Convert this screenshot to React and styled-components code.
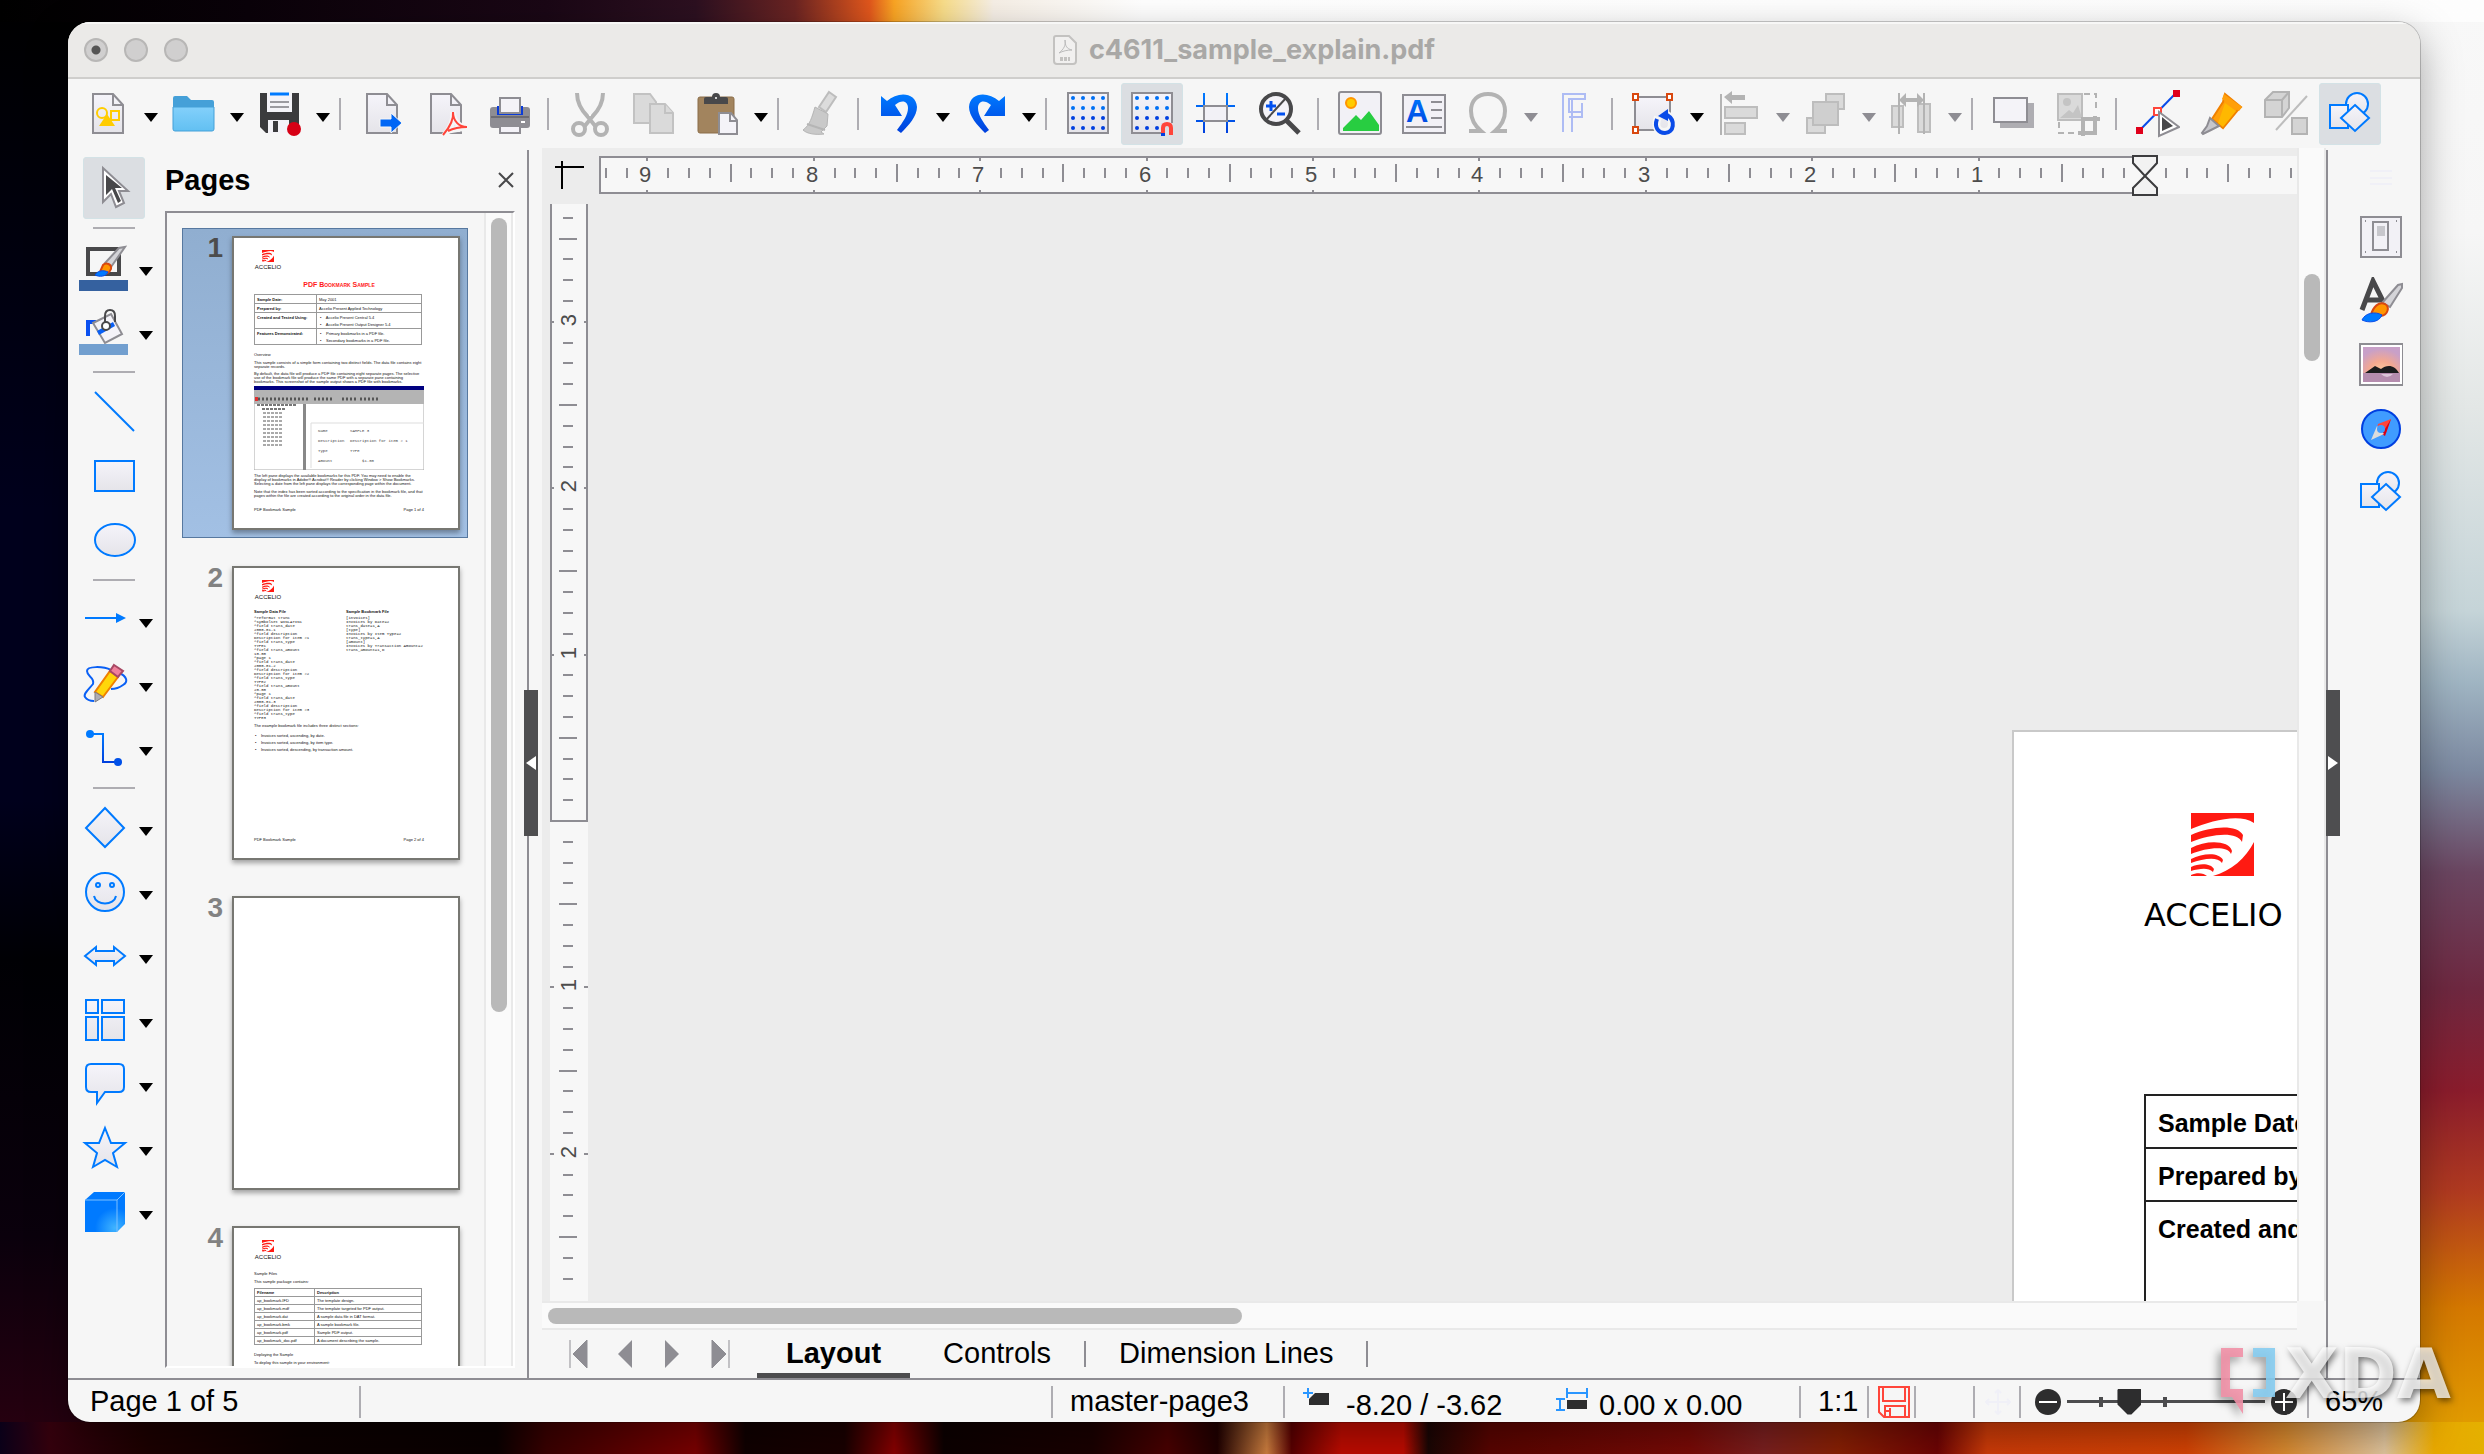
import React, { useState } from "react";
import styled, { createGlobalStyle, css } from "styled-components";

const GlobalStyle = createGlobalStyle`
  * {
    box-sizing: border-box;
  }
  body {
    margin: 0;
    background: #000;
    font-family: "Liberation Sans", Arial, sans-serif;
    font-size: 29px;
    color: #000;
  }
  button {
    margin: 0;
    padding: 0;
    border: 0;
    background: none;
    font: inherit;
    color: inherit;
  }
`;

const Desktop = styled.div`
  position: relative;
  display: flex;
  height: 100vh;
  min-height: 900px;
  padding: 22px 64px 32px 68px;
  overflow: hidden;
  background:
    linear-gradient(90deg, #000 0%, #0a0209 10%, #1a0715 22%, #2c1020 28%, #6b2422 32%, #e0561c 35%, #f9a423 36%, #f8dd8a 38%, #f6efe6 40%, #fff 46%, #fdfdfd 100%) top / 100% 22px no-repeat,
    linear-gradient(90deg, #0a0018 0%, #33000d 2%, #1c0000 6%, #0c0000 12%, #0a0000 20%, #3a0000 22%, #7c0000 28%, #100000 30%, #1a0000 34%, #8a0000 36%, #0c0000 38%, #1a0000 44%, #4a0000 47%, #200000 49%, #d08040 51%, #5a0000 52%, #c00c00 54%, #c00c00 56.5%, #1a0604 57.5%, #5a0400 60%, #7a0a06 68%, #7c2020 71%, #8a2004 74%, #700404 78%, #d03c08 80%, #d84404 88%, #dc8c30 92%, #e4c8a0 96%, #e8a800 98%, #e4b000 100%) bottom / 100% 32px no-repeat,
    linear-gradient(180deg, #f8f8f8 0%, #f6f6f6 16%, #e3e7e6 28%, #c5d4d8 42%, #9fb4c2 47%, #7c89a0 53%, #6a4560 60%, #6e2840 68%, #8a1c2c 75%, #b03a20 82%, #d47800 90%, #e4a400 100%) right / 100px 100% no-repeat,
    linear-gradient(180deg, #000 0%, #00001c 35%, #00001c 55%, #000004 66%, #0a000c 85%, #2a0010 100%) left / 100px 100% no-repeat;
`;

const Window = styled.main`
  display: flex;
  flex: 1;
  flex-direction: column;
  min-width: 0;
  overflow: hidden;
  border-radius: 22px;
  background: #f6f6f6;
  box-shadow: 0 0 0 1px rgba(0, 0, 0, 0.2), 0 14px 40px rgba(0, 0, 0, 0.35);
`;

const TitleBar = styled.header`
  position: relative;
  display: flex;
  align-items: center;
  justify-content: center;
  gap: 12px;
  height: 57px;
  flex: none;
  padding-bottom: 2px;
  background: #ebeae8;
  border-top: 2px solid #f7f7f6;
  border-bottom: 2px solid #cfcecc;
`;

const Lights = styled.div`
  position: absolute;
  left: 16px;
  top: 14px;
  display: flex;
  gap: 16px;
`;

const Light = styled.button`
  width: 24px;
  height: 24px;
  border: 2px solid #b8b7b6;
  border-radius: 50%;
  background: ${({ $edited }) =>
    $edited ? "radial-gradient(circle, #555 0 4px, #d0cfcf 5px)" : "#d0cfcf"};
`;

const FileName = styled.h1`
  margin: 0;
  font-family: Inter, "Liberation Sans", sans-serif;
  font-size: 27px;
  line-height: 32px;
  font-weight: 700;
  color: #a9a8a6;
`;

const Toolbar = styled.div`
  display: flex;
  align-items: center;
  height: 69px;
  flex: none;
  padding: 0 0 0 8px;
`;

const ToolButton = styled.button`
  display: flex;
  align-items: center;
  justify-content: center;
  width: 62px;
  height: 62px;
  margin: 1px;
  flex: none;
  border-radius: 3px;
  border: 1px solid transparent;
  ${({ $on }) =>
    $on &&
    css`
      background: #dbdee2;
      border-color: #d3e2e6;
    `}
`;

const DropButton = styled.button`
  display: flex;
  align-items: center;
  justify-content: center;
  width: 22px;
  height: 48px;
  padding-top: 7px;
  flex: none;
`;

const BarRule = styled.span`
  width: 2px;
  height: 32px;
  margin: 0 9px 0 5px;
  flex: none;
  background: #aeadb2;
`;

const Body = styled.div`
  display: flex;
  flex: 1;
  min-height: 0;
`;

const ToolColumn = styled.nav`
  width: 97px;
  flex: none;
  padding: 8px 0 0 15px;
  overflow: hidden;
`;

const ToolRow = styled.div`
  display: flex;
  align-items: center;
  height: 64px;
`;

const ColumnButton = styled(ToolButton)`
  margin: 0;
  width: ${({ $drop }) => ($drop ? "44px" : "62px")};
`;

const ColumnDrop = styled(DropButton)`
  margin-left: 8px;
`;

const ColumnRule = styled.hr`
  width: 42px;
  height: 2px;
  margin: 7px 0 7px 10px;
  border: 0;
  background: #aeadb2;
`;

const PagesPanel = styled.section`
  display: flex;
  flex-direction: column;
  width: 362px;
  flex: none;
  padding: 0 12px 10px 0;
`;

const PanelHead = styled.div`
  display: flex;
  align-items: center;
  justify-content: space-between;
  height: 63px;
  flex: none;
`;

const PanelTitle = styled.h2`
  margin: 0;
  font-size: 29px;
  line-height: 32px;
`;

const CloseButton = styled.button`
  display: flex;
  padding: 1px;
`;

const PageBox = styled.div`
  display: flex;
  flex: 1;
  min-height: 0;
  border: 2px solid #8e8d93;
  border-right-color: #fff;
  border-bottom-color: #fff;
`;

const PageList = styled.ol`
  display: flex;
  flex: 1;
  flex-direction: column;
  gap: 20px;
  margin: 0;
  padding: 15px 15px 0;
  overflow: hidden;
  list-style: none;
`;

const PageItem = styled.button`
  display: flex;
  align-items: flex-start;
  justify-content: flex-end;
  gap: 9px;
  width: 286px;
  height: 310px;
  padding: 7px;
  border: 1px solid ${({ $on }) => ($on ? "#57789f" : "transparent")};
  background: ${({ $on }) => ($on ? "linear-gradient(#90aed0, #a2c0e4)" : "none")};
  text-align: left;
`;

const PageNumber = styled.span`
  font-size: 28px;
  font-weight: 700;
  line-height: 24px;
  color: ${({ $on }) => ($on ? "#4c4c4c" : "#828282")};
`;

const Miniature = styled.span`
  display: flex;
  flex-direction: column;
  width: 228px;
  height: 294px;
  padding: 12px 34px 0 20px;
  border: 2px solid #777772;
  background: #fff;
  box-shadow: 0 3px 5px rgba(0, 0, 0, 0.35);
  font-size: 4px;
  line-height: 4px;
  color: #111;
  white-space: pre;
  overflow: hidden;
`;

const MiniBrand = styled.span`
  display: flex;
  flex-direction: column;
  align-items: center;
  gap: 2px;
  width: 28px;
  height: 22px;
  font-size: 6px;
  line-height: 6px;
`;

const MiniTitle = styled.strong`
  margin: 9px 0 5px;
  text-align: center;
  font-size: 7px;
  line-height: 8px;
  font-variant: small-caps;
  color: #ff1a1a;
`;

const MiniGrid = styled.span`
  display: grid;
  grid-template-columns: ${({ $first }) => $first}px 1fr;
  width: 168px;
  border: solid #999;
  border-width: 1px 0 0 1px;
`;

const MiniCell = styled.span`
  padding: 1px 2px 0;
  border: solid #999;
  border-width: 0 1px 1px 0;
  line-height: ${({ $tight }) => ($tight ? "6px" : "7px")};
  font-weight: ${({ $bold }) => ($bold ? 700 : 400)};
`;

const MiniText = styled.span`
  margin-top: ${({ $gap = 4 }) => $gap}px;
  font-family: ${({ $mono }) => ($mono ? '"Liberation Mono", monospace' : "inherit")};
  font-weight: ${({ $bold }) => ($bold ? 700 : 400)};
  line-height: ${({ $loose }) => ($loose ? "7px" : "4px")};
`;

const MiniColumns = styled.span`
  display: grid;
  grid-template-columns: 92px 1fr;
`;

const MiniFoot = styled.span`
  display: flex;
  justify-content: space-between;
  margin: auto 0 16px;
`;

const ScrollTrack = styled.div`
  display: flex;
  flex: none;
  background: #fafafa;
  border: 2px solid #e9e9e9;
  ${({ $across }) =>
    $across
      ? css`
          height: 29px;
          margin-right: 29px;
          padding: 5px 6px;
          border-width: 2px 0;
        `
      : css`
          width: 29px;
          padding: 5px 0 5px 5px;
          border-width: 0 2px;
        `}
`;

const ScrollThumb = styled.div`
  border-radius: 8px;
  background: #b9b9b9;
  width: ${({ $w }) => $w || "16px"};
  height: ${({ $h }) => $h || "16px"};
  margin-top: ${({ $from = 0 }) => $from}px;
`;

const Splitter = styled.div`
  position: relative;
  width: ${({ $wide }) => ($wide ? "15px" : "14px")};
  flex: none;
  margin-top: 2px;
  border-left: 2px solid #8e8d93;
`;

const SplitHandle = styled.button`
  position: absolute;
  top: calc(50% - 74px);
  left: ${({ $left }) => $left}px;
  display: flex;
  align-items: center;
  justify-content: center;
  width: 14px;
  height: 146px;
  background: #4e4e50;
`;

const Center = styled.section`
  display: flex;
  flex: 1;
  flex-direction: column;
  min-width: 0;
`;

const Work = styled.div`
  display: flex;
  flex: 1;
  min-height: 0;
`;

const Canvas = styled.div`
  display: flex;
  flex: 1;
  flex-direction: column;
  min-width: 0;
  background: #ececec;
`;

const RulerRow = styled.div`
  display: flex;
  height: 56px;
  flex: none;
  padding-top: 7px;
`;

const RulerCorner = styled.div`
  width: 57px;
  flex: none;
  padding: 6px 0 0 13px;
`;

const AcrossRuler = styled.div`
  display: flex;
  flex: 1;
  justify-content: flex-end;
  min-width: 0;
  overflow: hidden;
`;

const CanvasRow = styled.div`
  display: flex;
  flex: 1;
  min-height: 0;
`;

const DownRuler = styled.div`
  width: 38px;
  margin: 0 19px 0 8px;
  flex: none;
  overflow: hidden;
  background: #f7f7f7;
`;

const RulerDrawing = styled.svg`
  display: block;
  flex: none;
  font-size: 22px;
  fill: #4c4c4c;
  text-anchor: middle;
`;

const Desk = styled.div`
  display: flex;
  flex: 1;
  justify-content: flex-end;
  padding-top: 526px;
  overflow: hidden;
`;

const Sheet = styled.article`
  width: 285px;
  flex: none;
  padding: 81px 0 0 130px;
  border: solid #c9c9c9;
  border-width: 2px 0 0 2px;
  background: #fff;
  overflow: hidden;
`;

const Brand = styled.div`
  display: flex;
  flex-direction: column;
  gap: 19px;
  height: 281px;
  white-space: nowrap;
  font-family: "DejaVu Sans", sans-serif;
  font-size: 32px;
  line-height: 40px;
`;

const BrandMark = styled.svg`
  margin-left: ${({ $inset = 0 }) => $inset}px;
  flex: none;
`;

const SheetTable = styled.table`
  width: 400px;
  border-collapse: collapse;
  font-size: 25px;
  line-height: 30px;
  white-space: nowrap;

  th {
    height: 53px;
    padding: 12px 12px 8px;
    border: 2px solid #222;
    text-align: left;
    vertical-align: top;
  }
  tr:last-child th {
    height: 200px;
  }
`;

const TabBar = styled.div`
  display: flex;
  align-items: stretch;
  height: 48px;
  flex: none;
  padding-left: 13px;
`;

const NavButton = styled.button`
  display: flex;
  align-items: center;
  justify-content: center;
  width: 47px;
`;

const TabList = styled.div`
  display: flex;
  align-items: center;
  margin-left: 14px;
`;

const Tab = styled.button`
  height: ${({ $on }) => ($on ? "48px" : "26px")};
  line-height: 24px;
  padding: 0 33px;
  ${({ $on }) =>
    $on
      ? css`
          font-weight: 700;
          padding: 0 29px;
          border-bottom: 5px solid #4c4c4e;
          border-top: 3px solid transparent;
        `
      : css`
          padding-bottom: 2px;
          border-right: 2px solid #8e8d93;
        `}
`;

const SideBar = styled.aside`
  display: flex;
  flex-direction: column;
  align-items: center;
  width: 80px;
  flex: none;
  padding-left: 2px;
`;

const SideButton = styled.button`
  display: flex;
  align-items: center;
  justify-content: center;
  width: 62px;
  height: ${({ $small }) => ($small ? "57px" : "64px")};
`;

const StatusBar = styled.footer`
  display: flex;
  align-items: center;
  height: 44px;
  flex: none;
  padding-top: 1px;
  border-top: 2px solid #8e8d93;
`;

const StatusCell = styled.div`
  display: flex;
  align-items: center;
  gap: ${({ $gap = 0 }) => $gap}px;
  width: ${({ $w }) => $w}px;
  height: 32px;
  flex: ${({ $grow }) => ($grow ? 1 : "none")};
  padding-left: ${({ $pad = 0 }) => $pad}px;
  border-left: 2px solid ${({ $bare }) => ($bare ? "transparent" : "#aeadb2")};
  white-space: nowrap;
`;

const Reading = styled.span`
  padding-top: 8px;
`;

const RoundButton = styled.button`
  display: flex;
`;

const ZoomRange = styled.input`
  appearance: none;
  width: 198px;
  height: 28px;
  margin: 0;
  background:
    linear-gradient(#4c4c4e, #4c4c4e) 32px 50% / 4px 10px no-repeat,
    linear-gradient(#4c4c4e, #4c4c4e) 96px 50% / 4px 10px no-repeat,
    linear-gradient(#4c4c4e, #4c4c4e) 0 50% / 100% 3px no-repeat;

  &::-webkit-slider-thumb {
    appearance: none;
    width: 24px;
    height: 26px;
    background: #2d2d2e;
    clip-path: polygon(4% 0, 96% 0, 100% 6%, 100% 62%, 58% 100%, 42% 100%, 0 62%, 0 6%);
  }
`;

const Watermark = styled.div`
  position: absolute;
  right: 33px;
  bottom: 36px;
  display: flex;
  align-items: flex-start;
  gap: 8px;
  height: 70px;
  color: rgba(255, 255, 255, 0.75);
  font-family: "DejaVu Sans", sans-serif;
  font-size: 70px;
  line-height: 52px;
  font-weight: 700;
  text-shadow: 2px 3px 6px rgba(0, 0, 0, 0.5);
  pointer-events: none;

  svg {
    filter: drop-shadow(-3px 4px 4px rgba(0, 0, 0, 0.4));
  }
`;

const GREY = "#8e8d93";
const PALE = "#b3b3b3";

const Glyph = ({ w = 44, h = 48, children }) => (
  <svg width={w} height={h} viewBox={`0 0 ${w} ${h}`} fill="none" aria-hidden="true">
    {children}
  </svg>
);

const Caret = ({ off }) => (
  <svg width="14" height="9" viewBox="0 0 14 9" aria-hidden="true">
    <path d="M0 0h14L7 9z" fill={off ? GREY : "#000"} />
  </svg>
);

const Doc = () => (
  <>
    <path d="M7 4h20l10 11v28H7z" fill="url(#paper)" stroke={GREY} strokeWidth="2" />
    <path d="M27 4v11h10" stroke={GREY} strokeWidth="2" />
  </>
);

const Shapes = () => (
  <g fill="url(#paper)" stroke="#007aff" strokeWidth="2">
    <circle cx="29" cy="14" r="11" />
    <path d="M2 15h18v23H2z" />
    <path d="M27 15l14 13-14 13-14-13z" />
  </g>
);

const DotGrid = () => (
  <>
    <path d="M2 3h40v40H2z" fill="url(#paper)" stroke={GREY} strokeWidth="2" />
    {[7, 17, 27, 37].map((x) =>
      [8, 18, 28, 38].map((y) => (
        <circle key={`${x}-${y}`} cx={x} cy={y} r="2" fill={y < 20 ? "#0070f5" : "#003fe0"} />
      ))
    )}
  </>
);

const icons = {
  newDoc: (
    <>
      <Doc />
      <circle cx="16" cy="23" r="5" stroke="#fc0" strokeWidth="2" />
      <path d="M25 21h8v9h-8z" stroke="#fc0" strokeWidth="2" />
      <path d="M21 24l8 12H13z" fill="#fc0" />
    </>
  ),
  folder: (
    <>
      <path d="M1 8q0-2 2-2h12l4 4h21q2 0 2 2v10H1z" fill="#45a0d8" />
      <path d="M1 17h41v22q0 2-2 2H3q-2 0-2-2z" fill="url(#folder)" stroke="#45a0d8" />
    </>
  ),
  save: (
    <>
      <path d="M2 3h39v40H8l-6-6z" fill="#3b3b3d" />
      <path d="M9 3h25v19H9z" fill="#f4f3f8" />
      <path d="M12 4h19" stroke="#007aff" strokeWidth="3" />
      <path d="M12 12h19M12 17h19" stroke="#9b9aa0" strokeWidth="2" />
      <path d="M10 30h21v13H10z" fill="#f4f3f8" />
      <path d="M15 31h5v11h-5z" fill="#3b3b3d" />
      <circle cx="36" cy="39" r="7" fill="#d70015" />
    </>
  ),
  exportDoc: (
    <>
      <Doc />
      <path d="M20 29h11v-6l11 10-11 10v-6H20z" fill="#0066f5" stroke="#f6f6f6" />
    </>
  ),
  exportPdf: (
    <>
      <Doc />
      <path d="M20 46c7-8 10-16 9-24 0 9 6 15 14 16-9 0-14 2-21 3" stroke="#f6f6f6" strokeWidth="6" />
      <path d="M19 45c7-8 11-15 10-23 0 9 6 15 14 15-8 0-13 1-19 4" stroke="#ff453a" strokeWidth="2" />
    </>
  ),
  print: (
    <>
      <rect x="2" y="17" width="40" height="21" rx="3" fill={GREY} />
      <path d="M3 27h38" stroke="#6d6c72" strokeWidth="2" />
      <path d="M9 16h26v9H9z" fill="#0a3bd8" />
      <path d="M12 8h20v15H12zM12 36h20v7H12z" fill="#f4f3f8" stroke={GREY} strokeWidth="2" />
      <path d="M33 32h4" stroke="#fff" strokeWidth="2" />
    </>
  ),
  cut: (
    <>
      <path d="M9 3c0 9 5 18 11 24l8 10M35 3c0 9-5 18-11 24l-8 10" stroke={PALE} strokeWidth="4" />
      <circle cx="11" cy="39" r="6" stroke={PALE} strokeWidth="4" />
      <circle cx="33" cy="39" r="6" stroke={PALE} strokeWidth="4" />
      <circle cx="22" cy="25" r="1" fill="#fff" />
    </>
  ),
  copy: (
    <g fill="#dadada" stroke="#c2c2c2" strokeWidth="2">
      <path d="M2 4h16l6 8v21H2z" />
      <path d="M18 14h15l8 9v20H18z" />
      <path d="M33 14v9h8" />
    </g>
  ),
  paste: (
    <>
      <rect x="2" y="7" width="36" height="36" rx="2" fill="#a2845e" stroke="#8a6d48" />
      <path d="M8 14V9q0-2 2-2h6q0-4 4-4t4 4h6q2 0 2 2v5z" fill="#48484a" />
      <circle cx="20" cy="8" r="1" fill="#fff" />
      <path d="M23 23h12l6 7v14H23z" fill="#f4f3f8" stroke={GREY} strokeWidth="2" />
      <path d="M34 23v8h7" stroke={GREY} strokeWidth="2" />
    </>
  ),
  brush: (
    <>
      <path d="M31 2l7 5-10 15-7-5z" fill="#dcdcdc" stroke="#bdbdbd" strokeWidth="2" />
      <path d="M17 17l13 7-1 12-6 6 3 2c-8 1-17 0-21-4 7-5 9-13 12-23z" fill="#c9c9c9" stroke="#b5b5b5" />
      <path d="M9 34l18 6" stroke="#b5b5b5" strokeWidth="2" />
    </>
  ),
  undo: (
    <path
      d="M3 6l6 5C20 1 38 2 39 17c0 9-8 18-16 26l-4-3c6-8 11-15 11-22 0-7-6-9-13-3l7 11H3z"
      fill="url(#blue)"
    />
  ),
  redo: (
    <path
      d="M41 6l-6 5C24 1 6 2 5 17c0 9 8 18 16 26l4-3c-6-8-11-15-11-22 0-7 6-9 13-3l-7 11h21z"
      fill="url(#blue)"
    />
  ),
  grid: <DotGrid />,
  snap: (
    <>
      <DotGrid />
      <path d="M31 45V33h12v12z" fill="#dbdee2" />
      <path d="M33 45v-7q0-4 4-4t4 4v7" stroke="#ff453a" strokeWidth="4" />
      <path d="M31 43h4v3h-4z" fill="#003fe0" />
    </>
  ),
  guides: (
    <>
      <path d="M10 3v40M33 3v40M2 16h39M2 31h39" stroke="url(#blueLine)" strokeWidth="2" />
      <path d="M10 16h23v15H10z" stroke={GREY} strokeWidth="2" fill="#f2f1f6" />
    </>
  ),
  zoom: (
    <>
      <circle cx="18" cy="19" r="15" fill="#f4f3f8" stroke="#48484a" strokeWidth="4" />
      <path d="M28 30l13 13" stroke="#48484a" strokeWidth="5" />
      <path d="M8 30L28 8" stroke="#48484a" strokeWidth="2" />
      <path d="M8 16h10M13 11v10M19 24h8" stroke="#0050f0" strokeWidth="3" />
    </>
  ),
  image: (
    <>
      <rect x="1" y="2" width="42" height="42" rx="2" fill="#f2f1f6" stroke={GREY} strokeWidth="2" />
      <circle cx="13" cy="13" r="5" fill="#fc0" stroke="#ff9500" strokeWidth="2" />
      <path d="M5 41v-3l13-13 5 5 8-9 10 14v6z" fill="#28cd41" />
    </>
  ),
  textBox: (
    <>
      <path d="M1 5h42v38H1z" fill="#f2f1f6" stroke={GREY} strokeWidth="2" />
      <path d="M29 12h11M29 20h11M29 28h11M4 37h36" stroke={GREY} strokeWidth="2" />
      <text x="4" y="32" fontSize="31" fontFamily="Liberation Sans" fontWeight="700" fill="url(#blue)">
        A
      </text>
    </>
  ),
  omega: (
    <path
      d="M3 41h12C8 35 5 29 5 21 5 10 12 4 22 4s17 6 17 17c0 8-3 14-10 20h12"
      stroke={PALE}
      strokeWidth="4"
    />
  ),
  fontwork: (
    <path
      d="M11 42V4h22v5H17v13h13v5H17M11 4v38M20 42V9M30 13v13"
      stroke="#aebcf4"
      strokeWidth="2"
    />
  ),
  transform: (
    <>
      <path d="M3 7h35v33H3z" fill="url(#paper)" stroke={GREY} strokeWidth="2" />
      <path d="M1 4h5v6H1zM35 4h5v6h-5zM1 37h5v6H1z" fill="#fff" stroke="#d9480f" strokeWidth="2" />
      <path d="M26 27c-3 7-2 15 6 15 9 0 11-12 3-17" stroke="#f6f6f6" strokeWidth="8" />
      <path d="M25 29c-3 8 1 14 8 14 9 0 11-13 2-18" stroke="#0a4be8" strokeWidth="4" />
      <path d="M26 26l10-7v12z" fill="#0a4be8" />
    </>
  ),
  align: (
    <g fill="#dadada" stroke="#bdbdbd" strokeWidth="2">
      <path d="M3 4v41" stroke={PALE} />
      <path d="M7 17h32v11H7zM7 33h20v11H7z" />
      <path d="M6 7l8-6v4h13v5H14v4z" fill={PALE} stroke="none" />
    </g>
  ),
  arrange: (
    <g fill="#dadada" stroke="#bdbdbd" strokeWidth="2">
      <path d="M22 4h18v15H22zM3 28h18v15H3z" />
      <path d="M9 12h25v23H9z" fill="#cfcfcf" />
    </g>
  ),
  distribute: (
    <g fill="#dadada" stroke="#bdbdbd" strokeWidth="2">
      <path d="M2 16h11v21H2zM28 14h12v28H28z" />
      <path d="M9 3v41M34 3v41" stroke={PALE} />
      <path d="M9 10l7-7v5h11V3l7 7-7 7v-5H16v5z" fill={PALE} stroke="none" />
    </g>
  ),
  shadow: (
    <>
      <path d="M8 13h34v25H8z" fill="#aeadb2" />
      <path d="M2 8h33v24H2z" fill="#f4f3f8" stroke={GREY} strokeWidth="2" />
    </>
  ),
  crop: (
    <>
      <path d="M2 4h24v26H2z" fill="#dadada" stroke="#bdbdbd" strokeWidth="2" />
      <circle cx="11" cy="12" r="4" fill="#c4c4c4" />
      <path d="M4 28l9-8 4 3 5-8 4 13z" fill="#c4c4c4" />
      <path d="M28 4h12v18M3 32v11h18" stroke={PALE} strokeWidth="2" strokeDasharray="6 4" />
      <path d="M22 43h17V26M44 29H27v17" stroke={PALE} strokeWidth="4" />
    </>
  ),
  points: (
    <>
      <path d="M3 41L40 3" stroke="#0a4be8" strokeWidth="2" />
      <path d="M0 37h7v7H0zM37 0h7v7h-7z" fill="#e0001b" />
      <path d="M18 18h7v7h-7z" fill="#fff" stroke="#ff453a" strokeWidth="2" />
      <path d="M23 22v24l20-9z" fill="#fff" stroke={GREY} strokeWidth="2" />
      <path d="M26 27v14l11-5z" fill="#48484a" />
    </>
  ),
  glue: (
    <>
      <path d="M25 4l16 13-4 4-14 17-11-9 11-17z" fill="#ff9f0a" stroke="#f08000" strokeWidth="2" />
      <path d="M25 13l11 8-13 16-5-4z" fill="#ffb800" />
      <path d="M24 4l18 13-3 4L22 9z" fill="#ff9f0a" />
      <path d="M10 28l9 8-8 4-8 4-1-1 5-7z" fill="#c7c7cc" stroke={GREY} strokeWidth="2" />
    </>
  ),
  extrusion: (
    <>
      <path d="M1 10l8-8h16v16l-7 9H1zM1 10h17v17M18 10l7-8" fill="#d4d4d4" stroke={PALE} strokeWidth="2" />
      <path d="M43 6L12 40" stroke="#bdbdbd" strokeWidth="2" />
      <path d="M28 28h15v16H28z" fill="#d4d4d4" stroke={PALE} strokeWidth="2" />
    </>
  ),
  shapes: <Shapes />,
  select: (
    <>
      <path d="M11 4v34l8-8 5 13 8-4-5-12h9z" fill="#fff" stroke={GREY} strokeWidth="2" />
      <path d="M14 11v20l6-6 6 14 3-2-6-13h7z" fill="#48484a" />
    </>
  ),
  lineColor: (
    <>
      <path d="M5 5h31v25H5z" stroke="#48484a" strokeWidth="4" fill="#f6f6f6" />
      <path d="M42 3l-14 20-6-4L36 4z" fill="#d4d4d8" stroke={GREY} strokeWidth="2" />
      <path d="M20 21c3-3 9-1 8 4-2 5-6 6-12 5z" fill="#ff9500" stroke="#d9480f" strokeWidth="2" />
      <path d="M12 31c3-5 9-5 13-3-2 5-9 5-13 3z" fill="#007aff" stroke="#0a4be8" />
      <path d="M-4 36h49v11H-4z" fill="#35619f" />
    </>
  ),
  fillColor: (
    <>
      <path d="M5 28V14h8" stroke="#0a50f0" strokeWidth="4" />
      <path d="M10 15l18-9 11 20-17 9z" fill="#f4f3f8" stroke={GREY} strokeWidth="2" />
      <path d="M14 23l16-9 2 4-16 9z" fill="#0a60f5" />
      <path d="M22 16V8q0-6 5-6t5 6v6" stroke="#48484a" strokeWidth="2" />
      <circle cx="23" cy="18" r="4" fill="#fff" stroke="#48484a" strokeWidth="2" />
      <path d="M-4 36h49v11H-4z" fill="#729fcf" />
    </>
  ),
  line: <path d="M3 4l39 39" stroke="#007aff" strokeWidth="2" />,
  rect: <path d="M3 9h39v30H3z" fill="url(#paper)" stroke="#007aff" strokeWidth="2" />,
  ellipse: <ellipse cx="23" cy="24" rx="20" ry="16" fill="url(#paper)" stroke="#007aff" strokeWidth="2" />,
  arrow: (
    <>
      <path d="M2 22h34" stroke="#007aff" strokeWidth="2" />
      <path d="M33 17l10 5-10 5z" fill="#007aff" />
    </>
  ),
  pencil: (
    <>
      <path
        d="M28 10C20 6 4 6 4 11c0 6 8 6 6 13-4 5-10 10-8 13 2 3 6 4 9 4M35 12c10 5 10 10 5 13-4 3-8 4-12 4"
        stroke="#0a60f5"
        strokeWidth="2"
      />
      <path d="M27 11l8 6-15 20-8-5z" fill="#ffd60a" stroke="#f08000" strokeWidth="2" />
      <path d="M12 32l8 5-8 5z" fill="#aeadb2" stroke="#7c7b80" />
      <path d="M31 5l9 6-5 6-8-6z" fill="#f0809a" stroke="#a84864" strokeWidth="2" />
    </>
  ),
  connector: (
    <>
      <path d="M7 10h13v28h15" stroke="url(#blue)" strokeWidth="2" />
      <circle cx="7" cy="10" r="4" fill="#007aff" />
      <circle cx="35" cy="38" r="4" fill="#0050e8" />
    </>
  ),
  diamond: <path d="M22 4l19 20-19 19L3 24z" fill="url(#paper)" stroke="#007aff" strokeWidth="2" />,
  smiley: (
    <g stroke="#007aff" strokeWidth="2">
      <circle cx="22" cy="24" r="19" fill="url(#paper)" />
      <circle cx="15" cy="17" r="2" />
      <circle cx="29" cy="17" r="2" />
      <path d="M11 28c2 10 20 10 22 0" />
    </g>
  ),
  doubleArrow: (
    <path
      d="M2 24l11-9v4h18v-4l11 9-11 9v-4H13v4z"
      fill="url(#paper)"
      stroke="#007aff"
      strokeWidth="2"
    />
  ),
  flowchart: (
    <path
      d="M3 4h12v13H3zM19 4h22v13H19zM3 21h12v23H3zM19 21h22v23H19z"
      fill="url(#paper)"
      stroke="#007aff"
      strokeWidth="2"
    />
  ),
  callout: (
    <path
      d="M8 4h28q5 0 5 5v18q0 5-5 5H22l-8 11V32H8q-5 0-5-5V9q0-5 5-5z"
      fill="url(#paper)"
      stroke="#007aff"
      strokeWidth="2"
    />
  ),
  star: (
    <path
      d="M22 4l6 15h14L30 29l4 14-12-7-12 7 4-14L2 19h14z"
      fill="url(#paper)"
      stroke="#007aff"
      strokeWidth="2"
    />
  ),
  cube: (
    <>
      <path d="M2 12l9-8h31v32l-8 8H2z" fill="url(#cube)" />
      <path d="M2 12h32v32M34 12l8-8" stroke="#7cc0ff" />
    </>
  ),
};

const sideIcons = {
  properties: (
    <>
      <path d="M2 4h40v40H2z" fill="#f2f1f6" stroke={GREY} strokeWidth="2" />
      <path d="M14 9h15v28H14z" stroke={GREY} strokeWidth="2" />
      <path d="M18 13h8v10h-8z" fill="#c7c7cc" />
      <path d="M6 8h1M37 8h1M6 39h1M37 39h1" stroke={GREY} strokeWidth="2" />
    </>
  ),
  styles: (
    <>
      <path d="M3 33L14 4l11 22M7 23h15" stroke="#48484a" strokeWidth="5" />
      <path d="M43 7v4L31 30l-8-4L39 8z" fill="#d4d4d8" stroke={GREY} strokeWidth="2" />
      <path d="M12 38c2-8 8-14 14-11 5 3 3 11-4 12z" fill="#ff9500" stroke="#d9480f" strokeWidth="2" />
      <path d="M3 43c3-7 13-9 20-5-3 8-14 8-20 5z" fill="#007aff" stroke="#0a4be8" />
    </>
  ),
  gallery: (
    <>
      <path d="M1 3h43v41H1z" fill="#fff" stroke={GREY} strokeWidth="2" />
      <path d="M4 6h37v35H4z" fill="url(#dusk)" />
      <path d="M4 32h37v9H4z" fill="#b58cae" />
      <path d="M6 32l10-7 6 3c6-5 14-4 18 4z" fill="#1c1c1e" />
      <path d="M22 33h12q-6 6-12 0z" fill="#dcc4d8" />
    </>
  ),
  navigator: (
    <>
      <circle cx="22" cy="24" r="19" fill="#409cff" stroke="#003fe0" strokeWidth="2" />
      <path d="M32 14L19 19l-1 5 6 6 3-2z" fill="#ff453a" />
      <path d="M32 14l-6 17-3-2z" fill="#d70015" />
      <path d="M18 21l7 8-13 6z" fill="#dcdcdc" />
      <circle cx="22" cy="24" r="4" fill="#409cff" />
    </>
  ),
  shapes: <Shapes />,
};

const toolbarItems = [
  { icon: "newDoc", label: "New", drop: true },
  { icon: "folder", label: "Open", drop: true },
  { icon: "save", label: "Save", drop: true },
  "rule",
  { icon: "exportDoc", label: "Export" },
  { icon: "exportPdf", label: "Export as PDF" },
  { icon: "print", label: "Print" },
  "rule",
  { icon: "cut", label: "Cut" },
  { icon: "copy", label: "Copy" },
  { icon: "paste", label: "Paste", drop: true },
  "rule",
  { icon: "brush", label: "Clone formatting" },
  "rule",
  { icon: "undo", label: "Undo", drop: true },
  { icon: "redo", label: "Redo", drop: true },
  "rule",
  { icon: "grid", label: "Display grid" },
  { icon: "snap", label: "Snap to grid", on: true },
  { icon: "guides", label: "Helplines while moving" },
  { icon: "zoom", label: "Zoom and pan" },
  "rule",
  { icon: "image", label: "Insert image" },
  { icon: "textBox", label: "Insert text box" },
  { icon: "omega", label: "Special character", drop: true, off: true },
  { icon: "fontwork", label: "Fontwork" },
  "rule",
  { icon: "transform", label: "Transformations", drop: true },
  { icon: "align", label: "Align", drop: true, off: true },
  { icon: "arrange", label: "Arrange", drop: true, off: true },
  { icon: "distribute", label: "Distribute", drop: true, off: true },
  "rule",
  { icon: "shadow", label: "Shadow" },
  { icon: "crop", label: "Crop image" },
  "rule",
  { icon: "points", label: "Edit points" },
  { icon: "glue", label: "Glue points" },
  { icon: "extrusion", label: "Toggle extrusion" },
  { icon: "shapes", label: "Show draw functions", on: true },
];

const columnItems = [
  { icon: "select", label: "Select", on: true },
  "rule",
  { icon: "lineColor", label: "Line color", drop: true },
  { icon: "fillColor", label: "Fill color", drop: true },
  "rule",
  { icon: "line", label: "Line" },
  { icon: "rect", label: "Rectangle" },
  { icon: "ellipse", label: "Ellipse" },
  "rule",
  { icon: "arrow", label: "Lines and arrows", drop: true },
  { icon: "pencil", label: "Curves", drop: true },
  { icon: "connector", label: "Connectors", drop: true },
  "rule",
  { icon: "diamond", label: "Basic shapes", drop: true },
  { icon: "smiley", label: "Symbol shapes", drop: true },
  { icon: "doubleArrow", label: "Block arrows", drop: true },
  { icon: "flowchart", label: "Flowchart", drop: true },
  { icon: "callout", label: "Callouts", drop: true },
  { icon: "star", label: "Stars", drop: true },
  { icon: "cube", label: "3D objects", drop: true },
];

const Defs = () => (
  <svg width="0" height="0" style={{ position: "absolute" }} aria-hidden="true">
    <defs>
      <linearGradient id="paper" x1="0" y1="0" x2="0" y2="1">
        <stop stopColor="#f5f4fa" />
        <stop offset="1" stopColor="#e5e4e9" />
      </linearGradient>
      <linearGradient id="folder" x1="0" y1="0" x2="0" y2="1">
        <stop stopColor="#83d0fb" />
        <stop offset="1" stopColor="#62c0f2" />
      </linearGradient>
      <linearGradient id="blue" x1="0" y1="0" x2="0" y2="1">
        <stop stopColor="#007aff" />
        <stop offset="1" stopColor="#0040dd" />
      </linearGradient>
      <linearGradient id="blueLine" gradientUnits="userSpaceOnUse" x1="0" y1="3" x2="0" y2="43">
        <stop stopColor="#007aff" />
        <stop offset="1" stopColor="#0040dd" />
      </linearGradient>
      <radialGradient id="cube" cx="0.75" cy="0.9" r="0.5">
        <stop stopColor="#40b4ff" />
        <stop offset="1" stopColor="#007aff" />
      </radialGradient>
      <radialGradient id="dusk" cx="0.5" cy="0.75" r="0.7">
        <stop stopColor="#ffd0a0" />
        <stop offset="0.5" stopColor="#f4a890" />
        <stop offset="1" stopColor="#c8a0c8" />
      </radialGradient>
    </defs>
  </svg>
);

const AccelioMark = ({ size, inset }) => (
  <BrandMark width={size} height={size} viewBox="0 0 63 63" fill="#ff1a12" $inset={inset}>
    <path d="M0 0h63v10C48 0 20 8 0 16z" />
    <path d="M0 22c20-9 46-11 52 0l-1 7C46 18 20 21 0 29z" />
    <path d="M0 35c15-8 38-8 41 3l-1 3C36 32 15 35 0 41z" />
    <path d="M0 46c12-6 28-7 32 1l-1 3c-5-7-19-4-31 0z" />
    <path d="M0 54c8-4 20-4 23 2l-1 3c-5-5-14-3-22-1z" />
    <path d="M0 62c6-3 13-2 16 1H0z" />
    <path d="M63 29v34H22c18-5 33-18 41-34z" />
  </BrandMark>
);

// length of one inch on the rulers at this zoom, split in eighths
const INCH = 166.4;
const H_ZERO = 1546;
const V_ZERO = 617;

function ticksFor(from, to) {
  const list = [];
  for (let i = from; i <= to; i++) list.push(i);
  return list;
}

function HorizontalRuler() {
  return (
    <RulerDrawing width="1698" height="41" viewBox="0 0 1698 41">
      <path d="M0 1h1698v38H0z" fill="#f7f7f7" />
      <path d={`M${H_ZERO} 2H1v36h${H_ZERO}`} fill="none" stroke={GREY} strokeWidth="2" />
      {ticksFor(-74, 7).map((i) => {
        const x = Math.round(H_ZERO + (i * INCH) / 8);
        if (x < 3) return null;
        if (i % 8 === 0) {
          return i === 0 ? null : (
            <g key={i}>
              <path d={`M${x} 2v4M${x} 35v4`} stroke={GREY} strokeWidth="2" />
              <text x={x - 2} y="27">
                {Math.abs(i / 8)}
              </text>
            </g>
          );
        }
        const d = i % 4 === 0 ? "9v18" : "13v10";
        return <path key={i} d={`M${x} ${d}`} stroke={GREY} strokeWidth="2" />;
      })}
      <path
        d={`M${H_ZERO - 12} 1h24v7l-12 13-12-13zM${H_ZERO - 12} 40h24v-7l-12-12-12 12z`}
        fill="#f2f2f2"
        stroke="#3c3c3e"
        strokeWidth="2"
      />
    </RulerDrawing>
  );
}

function VerticalRuler() {
  return (
    <RulerDrawing width="38" height="1096" viewBox="0 0 38 1096">
      <path d={`M1 0v${V_ZERO}h36V0`} fill="none" stroke={GREY} strokeWidth="2" />
      {ticksFor(-29, 22).map((i) => {
        const y = Math.round(V_ZERO + (i * INCH) / 8);
        if (i === 0) return null;
        if (i % 8 === 0) {
          return (
            <g key={i}>
              <path d={`M0 ${y}h4M34 ${y}h4`} stroke={GREY} strokeWidth="2" />
              <text transform={`translate(26 ${y - 2}) rotate(-90)`}>{Math.abs(i / 8)}</text>
            </g>
          );
        }
        const d = i % 4 === 0 ? `M9 ${y}h18` : `M13 ${y}h10`;
        return <path key={i} d={d} stroke={GREY} strokeWidth="2" />;
      })}
    </RulerDrawing>
  );
}

const MiniHead = () => (
  <MiniBrand>
    <AccelioMark size={12} />
    ACCELIO
  </MiniBrand>
);

const ReaderShot = () => (
  <svg width="170" height="84" viewBox="0 0 170 84" fontSize="4" fill="#444">
    <path d="M0 0h170v84H0z" fill="#fff" stroke="#aaa" />
    <path d="M0 0h170v4H0z" fill="#000080" />
    <path d="M0 4h170v14H0z" fill="#b4b4b4" />
    <path d="M4 13h50M60 13h20M88 13h14M106 13h18" stroke="#555" strokeWidth="3" strokeDasharray="2 2" />
    <path d="M1 11h3v4H1z" fill="#e03030" />
    <path d="M49 18h3v66h-3z" fill="#888" />
    <path d="M3 19h40M8 23h24" stroke="#777" strokeWidth="2" strokeDasharray="3 1" />
    {[27, 31, 35, 39, 43, 47, 51, 55, 59].map((y) => (
      <path key={y} d={`M9 ${y}h20`} stroke="#aaa" strokeWidth="2" strokeDasharray="3 1" />
    ))}
    <path d="M57 82V37h113" fill="none" stroke="#ddd" />
    <g fontFamily="Liberation Mono">
      <text x="64" y="46">Name</text>
      <text x="96" y="46">SAMPLE 3</text>
      <text x="64" y="56">Description</text>
      <text x="96" y="56">Description for item # 1</text>
      <text x="64" y="66">Type</text>
      <text x="96" y="66">TYPE</text>
      <text x="64" y="76">Amount</text>
      <text x="108" y="76">$1.00</text>
    </g>
  </svg>
);

const MiniOne = () => (
  <>
    <MiniHead />
    <MiniTitle>PDF Bookmark Sample</MiniTitle>
    <MiniGrid $first={62}>
      <MiniCell $bold>Sample Date:</MiniCell>
      <MiniCell>May 2001</MiniCell>
      <MiniCell $bold>Prepared by:</MiniCell>
      <MiniCell>Accelio Present Applied Technology</MiniCell>
      <MiniCell $bold>Created and Tested Using:</MiniCell>
      <MiniCell>{" •    Accelio Present Central 5.4\n •    Accelio Present Output Designer 5.4"}</MiniCell>
      <MiniCell $bold>Features Demonstrated:</MiniCell>
      <MiniCell>{" •    Primary bookmarks in a PDF file.\n •    Secondary bookmarks in a PDF file."}</MiniCell>
    </MiniGrid>
    <MiniText $gap={8}>Overview</MiniText>
    <MiniText>
      {"This sample consists of a simple form containing two distinct fields. The data file contains eight\nseparate records."}
    </MiniText>
    <MiniText $gap={3}>
      {"By default, the data file will produce a PDF file containing eight separate pages. The selective\nuse of the bookmark file will produce the same PDF with a separate pane containing\nbookmarks. This screenshot of the sample output shows a PDF file with bookmarks."}
    </MiniText>
    <MiniText $gap={2}>
      <ReaderShot />
    </MiniText>
    <MiniText $gap={3}>
      {"The left pane displays the available bookmarks for this PDF. You may need to enable the\ndisplay of bookmarks in Adobe® Acrobat® Reader by clicking Window > Show Bookmarks.\nSelecting a date from the left pane displays the corresponding page within the document."}
    </MiniText>
    <MiniText>
      {"Note that the index has been sorted according to the specification in the bookmark file, and that\npages within the file are created according to the original order in the data file."}
    </MiniText>
    <MiniFoot>
      <span>PDF Bookmark Sample</span>
      <span>Page 1 of 4</span>
    </MiniFoot>
  </>
);

const recordLines = [
  "^reformat trunc",
  "^symbolset WINLATIN1",
  "^field trans_date",
  "2000-01-1",
  "^field description",
  "Description for item #1",
  "^field trans_type",
  "TYPE1",
  "^field trans_amount",
  "10.00",
  "^page 1",
  "^field trans_date",
  "2000-01-2",
  "^field description",
  "Description for item #2",
  "^field trans_type",
  "TYPE2",
  "^field trans_amount",
  "20.00",
  "^page 1",
  "^field trans_date",
  "2000-01-3",
  "^field description",
  "Description for item #3",
  "^field trans_type",
  "TYPE3",
];

const bookmarkLines = [
  "[invoices]",
  "Invoices by Date=2",
  "trans_date=1,A",
  "[type]",
  "Invoices by Item Type=2",
  "trans_type=1,A",
  "[amount]",
  "Invoices by Transaction Amount=2",
  "trans_amount=1,D",
];

const MiniTwo = () => (
  <>
    <MiniHead />
    <MiniColumns>
      <MiniText $gap={8} $bold>Sample Data File</MiniText>
      <MiniText $gap={8} $bold>Sample Bookmark File</MiniText>
      <MiniText $gap={2} $mono>{recordLines.join("\n")}</MiniText>
      <MiniText $gap={2} $mono>{bookmarkLines.join("\n")}</MiniText>
    </MiniColumns>
    <MiniText>The example bookmark file includes three distinct sections:</MiniText>
    <MiniText $loose>
      {" •    Invoices sorted, ascending, by date.\n •    Invoices sorted, ascending, by item type.\n •    Invoices sorted, descending, by transaction amount."}
    </MiniText>
    <MiniFoot>
      <span>PDF Bookmark Sample</span>
      <span>Page 2 of 4</span>
    </MiniFoot>
  </>
);

const sampleFiles = [
  ["Filename", "Description"],
  ["ap_bookmark.IFD", "The template design."],
  ["ap_bookmark.mdf", "The template targeted for PDF output."],
  ["ap_bookmark.dat", "A sample data file in DAT format."],
  ["ap_bookmark.bmk", "A sample bookmark file."],
  ["ap_bookmark.pdf", "Sample PDF output."],
  ["ap_bookmark_doc.pdf", "A document describing the sample."],
];

const MiniFour = () => (
  <>
    <MiniHead />
    <MiniText $gap={10}>Sample Files</MiniText>
    <MiniText>This sample package contains:</MiniText>
    <MiniText>
      <MiniGrid $first={60}>
        {sampleFiles.map(([name, about], i) => (
          <React.Fragment key={name}>
            <MiniCell $tight $bold={i === 0}>{name}</MiniCell>
            <MiniCell $tight $bold={i === 0}>{about}</MiniCell>
          </React.Fragment>
        ))}
      </MiniGrid>
    </MiniText>
    <MiniText $gap={8}>Deploying the Sample</MiniText>
    <MiniText>To deploy this sample in your environment:</MiniText>
  </>
);

const pages = [<MiniOne />, <MiniTwo />, null, <MiniFour />];

const navPaths = [
  "M1 0v28M18 0v28L4 14z",
  "M16 0v28L2 14z",
  "M2 0v28l14-14z",
  "M2 0v28l14-14zM19 0v28",
];

export default function App() {
  const [page, setPage] = useState(0);
  const [zoomLevel, setZoomLevel] = useState(29);

  return (
    <>
      <GlobalStyle />
      <Defs />
      <Desktop>
        <Window>
          <TitleBar>
            <Lights>
              <Light $edited aria-label="Close" />
              <Light aria-label="Minimize" />
              <Light aria-label="Full screen" />
            </Lights>
            <Glyph w={24} h={30}>
              <path d="M3 1h13l7 7v18q0 3-3 3H4q-3 0-3-3V3q0-2 2-2z" fill="#f1f0ef" stroke="#c3c2c0" strokeWidth="2" />
              <path d="M6 18c5-4 7-8 6-13 0 6 2 9 7 10-5 0-9 1-13 3z" stroke="#bbb" />
              <path d="M7 24h10" stroke="#c3c2c0" strokeWidth="4" strokeDasharray="3 1" />
            </Glyph>
            <FileName>c4611_sample_explain.pdf</FileName>
          </TitleBar>

          <Toolbar>
            {toolbarItems.map((item, i) =>
              item === "rule" ? (
                <BarRule key={i} />
              ) : (
                <React.Fragment key={item.icon}>
                  <ToolButton $on={item.on} aria-label={item.label}>
                    <Glyph>{icons[item.icon]}</Glyph>
                  </ToolButton>
                  {item.drop && (
                    <DropButton aria-label={`${item.label} options`}>
                      <Caret off={item.off} />
                    </DropButton>
                  )}
                </React.Fragment>
              )
            )}
          </Toolbar>

          <Body>
            <ToolColumn>
              {columnItems.map((item, i) =>
                item === "rule" ? (
                  <ColumnRule key={i} />
                ) : (
                  <ToolRow key={item.icon}>
                    <ColumnButton $on={item.on} $drop={item.drop} aria-label={item.label}>
                      <svg width="44" height="48" viewBox="0 0 44 48" fill="none" overflow="visible">
                        {icons[item.icon]}
                      </svg>
                    </ColumnButton>
                    {item.drop && (
                      <ColumnDrop aria-label={`${item.label} options`}>
                        <Caret />
                      </ColumnDrop>
                    )}
                  </ToolRow>
                )
              )}
            </ToolColumn>

            <PagesPanel>
              <PanelHead>
                <PanelTitle>Pages</PanelTitle>
                <CloseButton aria-label="Close pages">
                  <Glyph w={16} h={16}>
                    <path d="M1 1l14 14M15 1L1 15" stroke="#48484a" strokeWidth="2" />
                  </Glyph>
                </CloseButton>
              </PanelHead>
              <PageBox>
                <PageList>
                  {pages.map((content, i) => (
                    <li key={i}>
                      <PageItem $on={page === i} onClick={() => setPage(i)}>
                        <PageNumber $on={page === i}>{i + 1}</PageNumber>
                        <Miniature>{content}</Miniature>
                      </PageItem>
                    </li>
                  ))}
                </PageList>
                <ScrollTrack>
                  <ScrollThumb $h="794px" />
                </ScrollTrack>
              </PageBox>
            </PagesPanel>

            <Splitter $wide>
              <SplitHandle $left={-5} aria-label="Hide pages">
                <Glyph w={10} h={14}>
                  <path d="M10 0v14L0 7z" fill="#fff" />
                </Glyph>
              </SplitHandle>
            </Splitter>

            <Center>
              <Work>
                <Canvas>
                  <RulerRow>
                    <RulerCorner>
                      <Glyph w={29} h={34}>
                        <path d="M0 6h29M7 0v28" stroke="#000" strokeWidth="2" />
                      </Glyph>
                    </RulerCorner>
                    <AcrossRuler>
                      <HorizontalRuler />
                    </AcrossRuler>
                  </RulerRow>
                  <CanvasRow>
                    <DownRuler>
                      <VerticalRuler />
                    </DownRuler>
                    <Desk>
                      <Sheet>
                        <Brand>
                          <AccelioMark size={63} inset={47} />
                          ACCELIO
                        </Brand>
                        <SheetTable>
                          <tbody>
                            <tr>
                              <th scope="row">Sample Date:</th>
                            </tr>
                            <tr>
                              <th scope="row">Prepared by:</th>
                            </tr>
                            <tr>
                              <th scope="row">Created and Tested Using:</th>
                            </tr>
                          </tbody>
                        </SheetTable>
                      </Sheet>
                    </Desk>
                  </CanvasRow>
                </Canvas>
                <ScrollTrack>
                  <ScrollThumb $h="87px" $from={121} />
                </ScrollTrack>
              </Work>
              <ScrollTrack $across>
                <ScrollThumb $w="694px" />
              </ScrollTrack>
              <TabBar>
                {navPaths.map((d, i) => (
                  <NavButton key={d} aria-label={["First", "Previous", "Next", "Last"][i]}>
                    <svg width="20" height="28" viewBox="0 0 20 28">
                      <path d={d} fill={GREY} stroke={i % 3 === 0 ? GREY : "none"} />
                    </svg>
                  </NavButton>
                ))}
                <TabList>
                  <Tab $on>Layout</Tab>
                  <Tab>Controls</Tab>
                  <Tab>Dimension Lines</Tab>
                </TabList>
              </TabBar>
            </Center>

            <Splitter>
              <SplitHandle $left={-2} aria-label="Hide sidebar">
                <Glyph w={10} h={14}>
                  <path d="M0 0v14l10-7z" fill="#fff" />
                </Glyph>
              </SplitHandle>
            </Splitter>

            <SideBar>
              <SideButton $small aria-label="Sidebar settings">
                <Glyph w={22} h={18}>
                  <path d="M0 3h22M0 10h22M0 16h22" stroke="#f0f0f7" strokeWidth="2" />
                </Glyph>
              </SideButton>
              {Object.entries(sideIcons).map(([name, icon]) => (
                <SideButton key={name} aria-label={name}>
                  <Glyph>{icon}</Glyph>
                </SideButton>
              ))}
            </SideBar>
          </Body>

          <StatusBar>
            <StatusCell $w={291} $pad={20} $bare>
              Page 1 of 5
            </StatusCell>
            <StatusCell $grow />
            <StatusCell $w={232} $pad={17}>
              master-page3
            </StatusCell>
            <StatusCell $w={253} $pad={18} $gap={16}>
              <Glyph w={27} h={30}>
                <path d="M5 1v10M0 6h10" stroke="#2a96ff" strokeWidth="2" />
                <path d="M12 6h14v12H6v-6z" fill="#2d2d2e" />
              </Glyph>
              <Reading>-8.20 / -3.62</Reading>
            </StatusCell>
            <StatusCell $w={263} $pad={18} $gap={11} $bare>
              <Glyph w={32} h={30}>
                <path d="M11 1v10M31 1v10M11 6h20M0 12h9M0 23h9M4 12v11" stroke="#2a96ff" strokeWidth="2" />
                <path d="M11 13h20v9H11z" fill="#2d2d2e" />
              </Glyph>
              <Reading>0.00 x 0.00</Reading>
            </StatusCell>
            <StatusCell $w={68} $pad={17}>
              1:1
            </StatusCell>
            <StatusCell $w={47} $pad={9}>
              <Glyph w={32} h={32}>
                <path d="M1 1h30v30H6l-5-5zM5 1v14h22V1M7 31V20h20v11M7 25h5M12 22v8" stroke="#ff453a" strokeWidth="2" />
              </Glyph>
            </StatusCell>
            <StatusCell $w={59} />
            <StatusCell $w={46} $pad={10}>
              <Glyph w={26} h={26}>
                <path d="M13 1v24M1 13h24M10 4l3-3 3 3M10 22l3 3 3-3M4 10l-3 3 3 3M22 10l3 3-3 3" stroke="#f0f0f7" strokeWidth="2" />
              </Glyph>
            </StatusCell>
            <StatusCell $w={288} $pad={14} $gap={6}>
              <RoundButton aria-label="Zoom out">
                <Glyph w={26} h={26}>
                  <circle cx="13" cy="13" r="13" fill="#2d2d2e" />
                  <path d="M4 13h18" stroke="#fff" strokeWidth="2" />
                </Glyph>
              </RoundButton>
              <ZoomRange
                type="range"
                aria-label="Zoom"
                value={zoomLevel}
                onChange={(e) => setZoomLevel(e.target.value)}
              />
              <RoundButton aria-label="Zoom in">
                <Glyph w={26} h={26}>
                  <circle cx="13" cy="13" r="13" fill="#2d2d2e" />
                  <path d="M4 13h18M13 4v18" stroke="#fff" strokeWidth="2" />
                </Glyph>
              </RoundButton>
            </StatusCell>
            <StatusCell $w={113} $pad={16}>
              65%
            </StatusCell>
          </StatusBar>
        </Window>

        <Watermark>
          <Glyph w={56} h={70}>
            <path d="M22 0H0v49h11l11 17V41H9V9h13z" fill="#f090a6" fillOpacity="0.9" />
            <path d="M32 0h22v49H32v-8h13V9H32z" fill="#86ccf0" fillOpacity="0.9" />
          </Glyph>
          <span>XDA</span>
        </Watermark>
      </Desktop>
    </>
  );
}
